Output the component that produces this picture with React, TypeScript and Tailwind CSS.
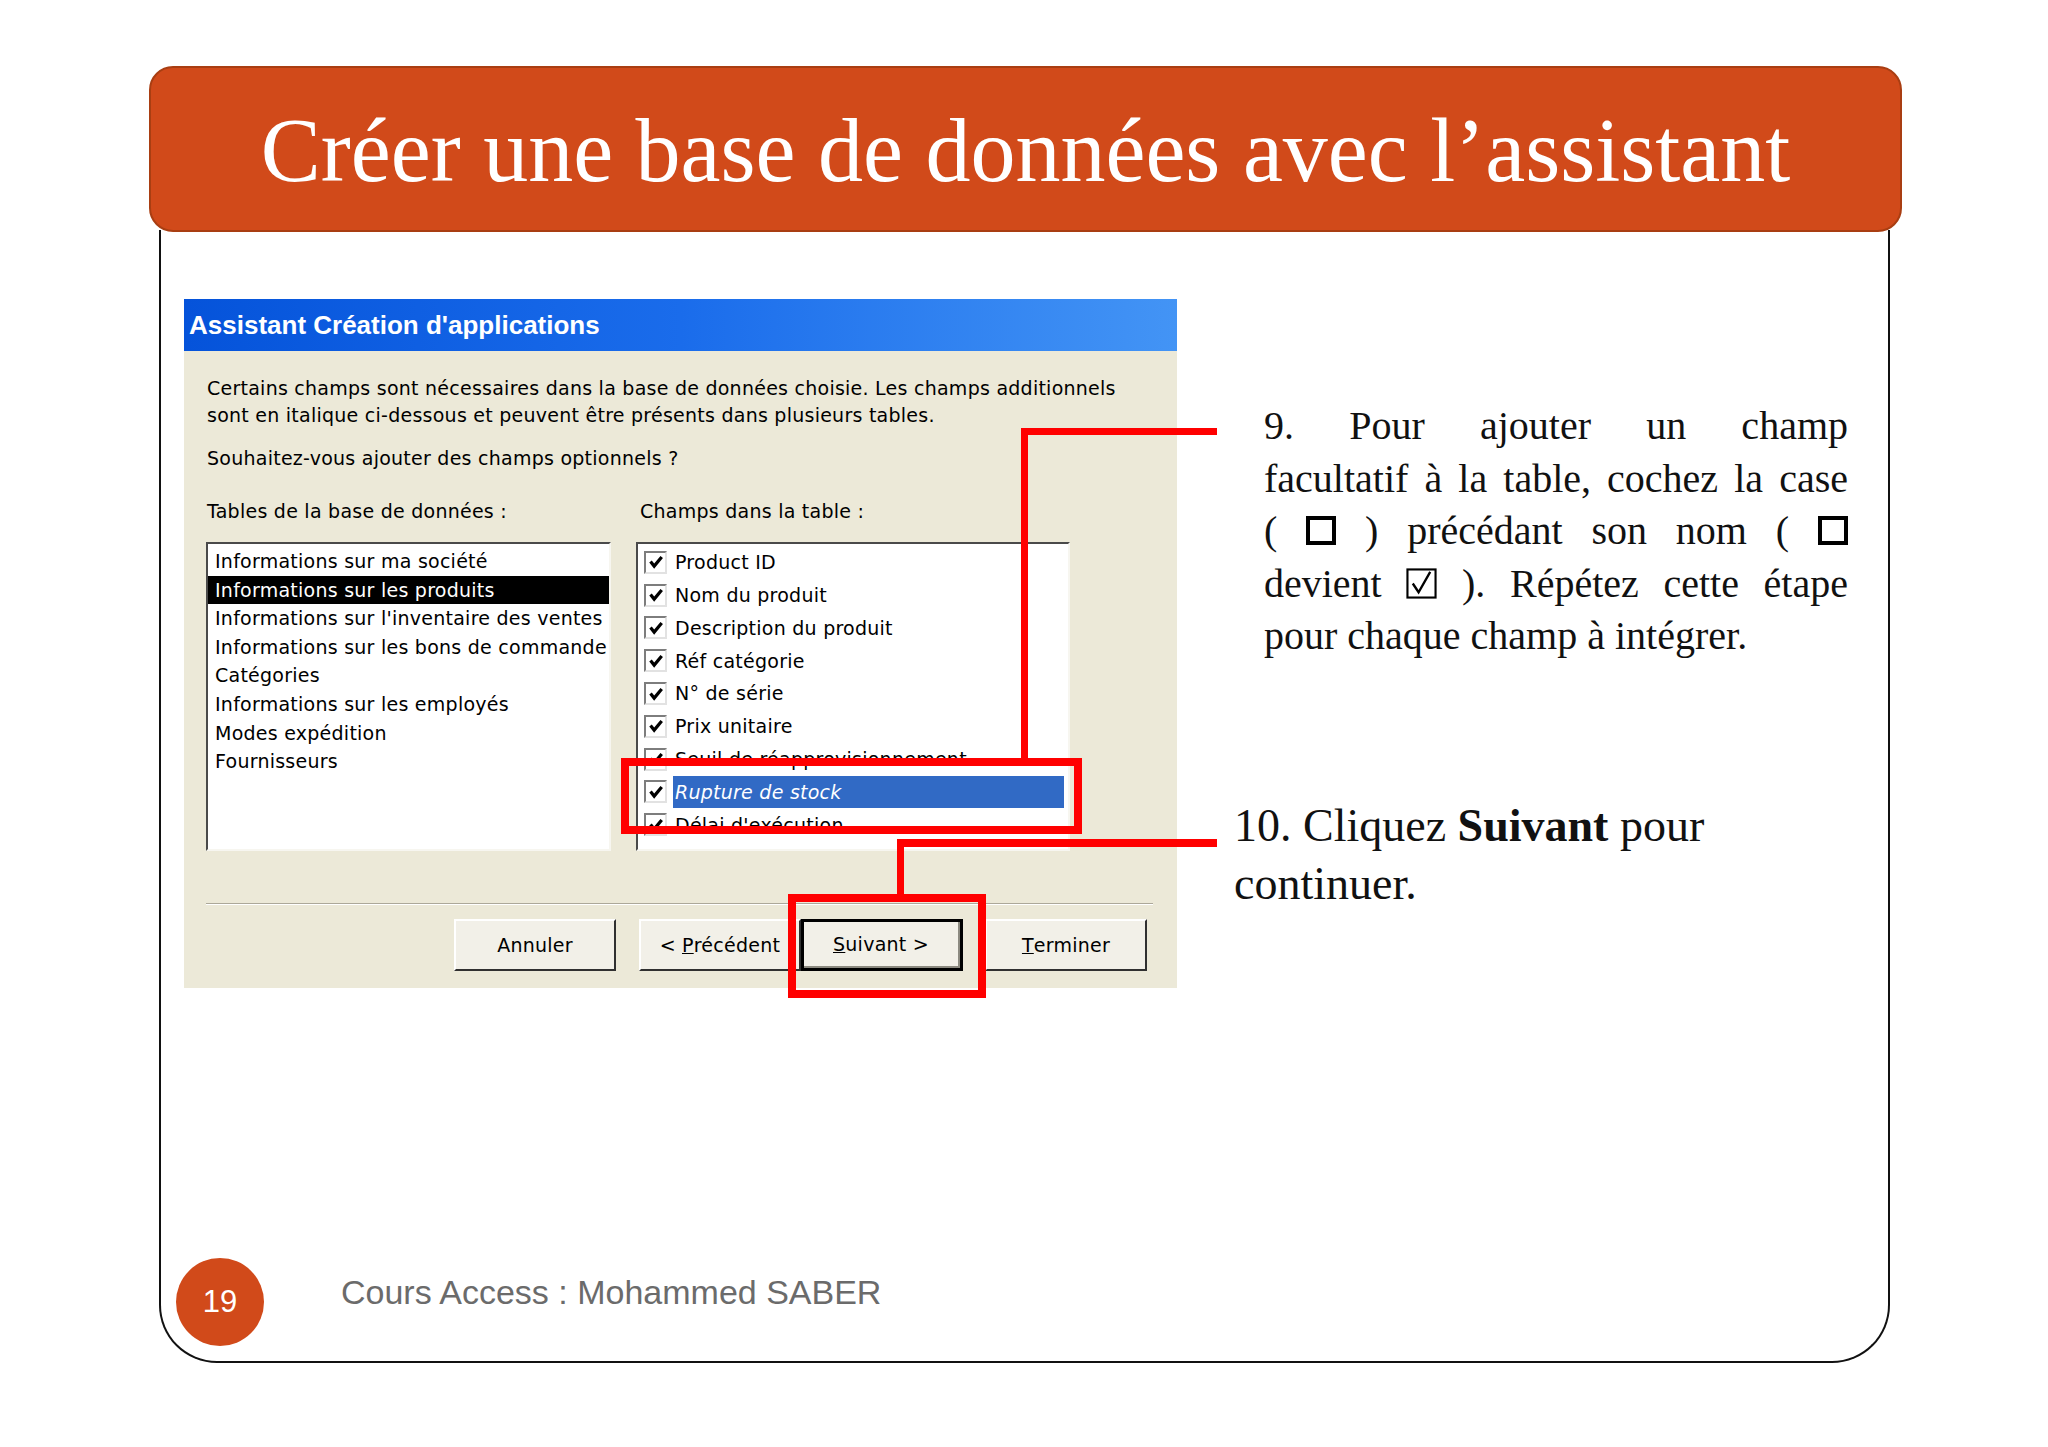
import React from "react";

const tables = [
  "Informations sur ma société",
  "Informations sur les produits",
  "Informations sur l'inventaire des ventes",
  "Informations sur les bons de commande",
  "Catégories",
  "Informations sur les employés",
  "Modes expédition",
  "Fournisseurs",
];

const fields = [
  "Product ID",
  "Nom du produit",
  "Description du produit",
  "Réf catégorie",
  "N° de série",
  "Prix unitaire",
  "Seuil de réapprovisionnement",
  "Rupture de stock",
  "Délai d'exécution",
];

function CheckBox() {
  return (
    <span className="flex h-[23px] w-[23px] shrink-0 items-center justify-center border-2 border-t-[#7d7d7d] border-l-[#7d7d7d] border-b-[#e2e2e2] border-r-[#e2e2e2] bg-white">
      <svg viewBox="0 0 14 14" className="h-[16px] w-[16px]">
        <path d="M2.2 6.6 L5.4 10.6 L12 2.6" stroke="#000" strokeWidth="2.8" fill="none" />
      </svg>
    </span>
  );
}

function WinButton({ children, primary }: { children: React.ReactNode; primary?: boolean }) {
  if (primary) {
    return (
      <div className="flex h-[52px] w-[162px] items-center justify-center border-[3px] border-black bg-[#F2F0E8]">
        <div className="flex h-full w-full items-center justify-center border-b-2 border-r-2 border-b-[#8c8a80] border-r-[#8c8a80]">
          {children}
        </div>
      </div>
    );
  }
  return (
    <div className="flex h-[52px] w-[162px] items-center justify-center border-2 border-t-white border-l-white border-b-[#303030] border-r-[#303030] bg-[#F2F0E8]">
      {children}
    </div>
  );
}

function Dialog() {
  return (
    <div className="flex h-[689px] w-[993px] shrink-0 flex-col bg-[#ECE9D8] font-['DejaVu_Sans',sans-serif] text-[19px] tracking-[0.25px] text-black">
      <div className="flex h-[52px] items-center bg-gradient-to-r from-[#0553DA] via-[#1A6CEB] to-[#4394F5] pl-[5px]">
        <span className="font-['Liberation_Sans',Arial,sans-serif] text-[26px] font-bold leading-none tracking-normal text-white">
          Assistant Création d'applications
        </span>
      </div>
      <div className="flex flex-col px-[22px] pt-[24px]">
        <p className="pl-[1px] leading-[27px]">
          Certains champs sont nécessaires dans la base de données choisie. Les champs additionnels
          <br />
          sont en italique ci-dessous et peuvent être présents dans plusieurs tables.
        </p>
        <p className="mt-[16px] pl-[1px] leading-[27px]">Souhaitez-vous ajouter des champs optionnels ?</p>
        <div className="mt-[26px] flex leading-[27px]">
          <span className="w-[430px] pl-[1px]">Tables de la base de données :</span>
          <span className="pl-[4px]">Champs dans la table :</span>
        </div>
        <div className="mt-[17px] flex gap-[25px]">
          <div className="h-[309px] w-[405px] border-2 border-t-[#4a4a4a] border-l-[#4a4a4a] border-b-[#f7f6f0] border-r-[#f7f6f0] bg-white pt-[3px]">
            {tables.map((t, i) => (
              <div
                key={t}
                className={
                  i === 1
                    ? "flex h-[28.6px] items-center bg-black pl-[7px] text-white"
                    : "flex h-[28.6px] items-center pl-[7px]"
                }
              >
                {t}
              </div>
            ))}
          </div>
          <div className="h-[309px] w-[434px] overflow-hidden border-2 border-t-[#4a4a4a] border-l-[#4a4a4a] border-b-[#f7f6f0] border-r-[#f7f6f0] bg-white pt-[2px] pr-[4px]">
            {fields.map((f, i) => (
              <div key={f} className="flex h-[32.8px] items-center gap-[6px] pl-[6px]">
                <CheckBox />
                {i === 7 ? (
                  <span className="flex h-[32px] flex-1 items-center bg-[#316AC5] pl-[2px] italic text-white">{f}</span>
                ) : (
                  <span className="pl-[2px]">{f}</span>
                )}
              </div>
            ))}
          </div>
        </div>
        <div className="mt-[52px] h-[2px] w-[947px] border-t border-b border-t-[#ACA899] border-b-white" />
        <div className="mt-[14px] flex pl-[248px]">
          <WinButton>Annuler</WinButton>
          <div className="w-[23px]" />
          <WinButton>
            &lt; <u className="ml-[6px]">P</u>récédent
          </WinButton>
          <WinButton primary>
            <u>S</u>uivant &gt;
          </WinButton>
          <div className="w-[22px]" />
          <WinButton>
            <u>T</u>erminer
          </WinButton>
        </div>
      </div>
    </div>
  );
}

function EmptyBox() {
  return <span className="mb-[-1px] inline-block h-[29px] w-[30px] border-[4px] border-black align-baseline" />;
}

function TickBox() {
  return (
    <svg viewBox="0 0 32 32" className="mb-[-2px] inline-block h-[31px] w-[31px] align-baseline">
      <rect x="1.5" y="1.5" width="29" height="29" fill="none" stroke="#000" strokeWidth="2.2" />
      <path d="M7 16 L13 25 L25 4" fill="none" stroke="#000" strokeWidth="2.4" />
    </svg>
  );
}

function Explanations() {
  const just = "text-justify [text-align-last:justify]";
  return (
    <div className="flex flex-col pt-[101px] font-['Liberation_Serif','Times_New_Roman',serif] text-[#111]">
      <div className="ml-[87px] w-[584px] text-[40px] leading-[52.5px]">
        <div className={just}>9. Pour ajouter un champ</div>
        <div className={just}>facultatif à la table, cochez la case</div>
        <div className={just}>
          ( <EmptyBox /> ) précédant son nom ( <EmptyBox />
        </div>
        <div className={just}>
          devient <TickBox /> ). Répétez cette étape
        </div>
        <div>pour chaque champ à intégrer.</div>
      </div>
      <div className="ml-[57px] mt-[134px] text-[46px] leading-[58px]">
        10. Cliquez <b>Suivant</b> pour
        <br />
        continuer.
      </div>
    </div>
  );
}

export default function App() {
  return (
    <div className="relative h-[1447px] w-[2048px] overflow-hidden bg-white">
      <div className="pl-[149px] pt-[66px]">
        <header className="relative z-10 flex h-[166px] w-[1753px] items-center justify-center rounded-[24px] border-2 border-[#A93E12] bg-[#D14A1A]">
          <h1 className="mt-[4px] font-['Liberation_Serif','Times_New_Roman',serif] text-[90px] leading-none text-white">
            Créer une base de données avec l’assistant
          </h1>
        </header>
        <div className="-mt-[2px] ml-[10px] flex h-[1133px] w-[1731px] flex-col rounded-b-[58px] border-x-2 border-b-2 border-[#111]">
          <div className="flex pt-[69px] pl-[23px]">
            <Dialog />
            <Explanations />
          </div>
          <div className="mt-auto flex items-center pb-[15px] pl-[15px]">
            <div className="flex h-[88px] w-[88px] items-center justify-center rounded-full bg-[#D14A1A] font-['Liberation_Sans',Arial,sans-serif] text-[31px] text-white">
              19
            </div>
            <span className="-mt-[20px] ml-[77px] font-['Liberation_Sans',Arial,sans-serif] text-[34px] text-[#6b6b6b]">
              Cours Access : Mohammed SABER
            </span>
          </div>
        </div>
      </div>

      {/* red annotation marks drawn over the screenshot */}
      <div className="absolute left-[1021px] top-[428px] h-[7px] w-[196px] bg-[#FF0000]" />
      <div className="absolute left-[1021px] top-[428px] h-[334px] w-[7px] bg-[#FF0000]" />
      <div className="absolute left-[621px] top-[758px] h-[76px] w-[461px] border-[8px] border-[#FF0000]" />
      <div className="absolute left-[897px] top-[839px] h-[8px] w-[320px] bg-[#FF0000]" />
      <div className="absolute left-[897px] top-[839px] h-[58px] w-[7px] bg-[#FF0000]" />
      <div className="absolute left-[788px] top-[894px] h-[104px] w-[198px] border-[8px] border-[#FF0000]" />
    </div>
  );
}
